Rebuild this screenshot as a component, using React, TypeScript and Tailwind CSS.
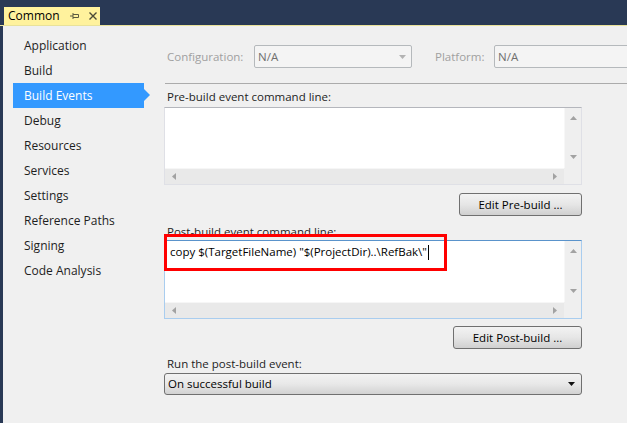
import React from "react";

const navItems = [
  "Application",
  "Build",
  "Build Events",
  "Debug",
  "Resources",
  "Services",
  "Settings",
  "Reference Paths",
  "Signing",
  "Code Analysis",
];

// small scrollbar / combo arrows
function Arrow({ dir, color = "#a2a2a2" }: { dir: "up" | "down" | "left" | "right"; color?: string }) {
  const vertical = dir === "up" || dir === "down";
  const pts = {
    up: "0,4 3.5,0 7,4",
    down: "0,0 3.5,4 7,0",
    left: "4,0 0,3.5 4,7",
    right: "0,0 4,3.5 0,7",
  }[dir];
  return (
    <svg width={vertical ? 7 : 4} height={vertical ? 4 : 7} className="block">
      <polygon points={pts} fill={color} />
    </svg>
  );
}

function CommandBox({ focused, height, children }: { focused?: boolean; height: string; children?: React.ReactNode }) {
  return (
    <div
      className={`flex w-[418px] flex-col border bg-white ${height} ${
        focused ? "border-[#a9cdef] border-t-[#5a93cb]" : "border-[#dfe0e6] border-t-[#b4b6bc]"
      }`}
    >
      <div className="flex min-h-0 flex-1">
        <div className="flex-1 pl-[5px] pt-[3px]">{children}</div>
        <div className="flex w-[17px] flex-col items-center justify-between border-l border-[#f7f7f7] bg-[#efefef] pb-[9px] pt-[8px]">
          <Arrow dir="up" />
          <Arrow dir="down" />
        </div>
      </div>
      <div className="flex h-[16px]">
        <div className="flex flex-1 items-center justify-between border-t border-[#f6f6f6] bg-[#e9e9e9] px-[7px]">
          <Arrow dir="left" />
          <Arrow dir="right" />
        </div>
        <div className="w-[17px] bg-[#efefef]" />
      </div>
    </div>
  );
}

function Win7Button({ label, width }: { label: string; width: string }) {
  return (
    <div
      className={`flex h-[23px] items-center justify-center rounded-[3px] border border-[#707070] bg-gradient-to-b from-[#f3f3f3] via-[#e6e6e6] to-[#d0d0d0] text-black ${width}`}
    >
      {label}
    </div>
  );
}

function DisabledCombo({ width }: { width: string }) {
  return (
    <div
      className={`flex h-[23px] shrink-0 items-center justify-between rounded-[2px] border border-[#b5b9bc] bg-[#f4f4f4] pl-[3px] pr-[5px] text-[#707070] ${width}`}
    >
      <span>N/A</span>
      <Arrow dir="down" color="#b3b3b3" />
    </div>
  );
}

export default function App() {
  return (
    <div className="relative flex h-[423px] w-[627px] flex-col overflow-hidden bg-[#f0f0f0] font-['Open_Sans',sans-serif] text-[11.5px] text-[#1e1e1e]">
      {/* document tab strip */}
      <div className="flex h-[25px] shrink-0 items-end bg-[#293955] pl-[4px]">
        <div className="flex h-[18px] w-[96px] items-center bg-[#fff29d] pl-[4px] text-[12px] text-black">
          <span className="leading-none">Common</span>
          <svg width="10" height="8" viewBox="0 0 10 8" className="ml-[10px]">
            <path d="M0 4H3M3 1V7M3 2.5H8.5V5.5H3" stroke="#5a5a40" strokeWidth="1" fill="none" />
          </svg>
          <svg width="8" height="8" viewBox="0 0 8 8" className="ml-[9px]">
            <path d="M0.5 0.5L7.5 7.5M7.5 0.5L0.5 7.5" stroke="#4a4a38" strokeWidth="1.4" />
          </svg>
        </div>
      </div>
      <div className="h-px shrink-0 bg-[#e9e29a]" />

      <div className="flex min-h-0 flex-1">
        <div className="w-[3px] shrink-0 bg-[#293955]" />

        {/* left nav */}
        <div className="w-[161px] shrink-0 pt-[7px] text-[12px]">
          {navItems.map((item) =>
            item === "Build Events" ? (
              <div key={item} className="relative ml-[10px] flex h-[25px] w-[131px] items-center bg-[#3399ff] pl-[11px] text-white">
                {item}
                <div className="absolute left-[131px] top-[6px] h-0 w-0 border-y-[6px] border-l-[6px] border-y-transparent border-l-[#3399ff]" />
              </div>
            ) : (
              <div key={item} className="ml-[10px] flex h-[25px] items-center pl-[11px]">
                {item}
              </div>
            )
          )}
        </div>

        {/* right content */}
        <div className="flex min-w-0 flex-1 flex-col pt-[19px]">
          <div className="flex h-[23px] items-center">
            <span className="w-[90px] shrink-0 pl-[3px] text-[#a0a0a0]">Configuration:</span>
            <DisabledCombo width="w-[158px]" />
            <span className="ml-[23px] w-[59px] shrink-0 text-[#a0a0a0]">Platform:</span>
            <DisabledCombo width="w-[160px]" />
          </div>

          <div className="ml-[1px] mt-[15px] h-px bg-[#ababab]" />

          <div className="mt-[5px] h-[16px] pl-[3px] leading-[16px]">Pre-build event command line:</div>
          <div className="mt-[2px]">
            <CommandBox height="h-[78px]" />
          </div>
          <div className="mt-[8px] flex w-[418px] justify-end">
            <Win7Button label="Edit Pre-build ..." width="w-[123px]" />
          </div>

          <div className="mt-[8px] h-[16px] pl-[3px] leading-[16px]">Post-build event command line:</div>
          <CommandBox focused height="h-[79px]">
            <div className="flex h-[16px] items-center leading-[16px] text-black">
              <span>copy $(TargetFileName) "$(ProjectDir)..\RefBak\"</span>
              <span className="ml-[1px] h-[15px] w-px bg-black" />
            </div>
          </CommandBox>
          <div className="mt-[7px] flex w-[418px] justify-end">
            <Win7Button label="Edit Post-build ..." width="w-[129px]" />
          </div>

          <div className="mt-[7px] h-[16px] pl-[3px] leading-[16px]">Run the post-build event:</div>
          <div className="mt-[1px] flex h-[22px] w-[418px] items-center justify-between rounded-[3px] border border-[#707070] bg-gradient-to-b from-[#f3f3f3] via-[#e8e8e8] to-[#d2d2d2] pl-[3px] pr-[6px] text-black">
            <span>On successful build</span>
            <Arrow dir="down" color="#111111" />
          </div>
        </div>
      </div>

      {/* red highlight annotation */}
      <div className="pointer-events-none absolute left-[164px] top-[234px] h-[37px] w-[283px] border-[3px] border-[#ff0000]" />
    </div>
  );
}
